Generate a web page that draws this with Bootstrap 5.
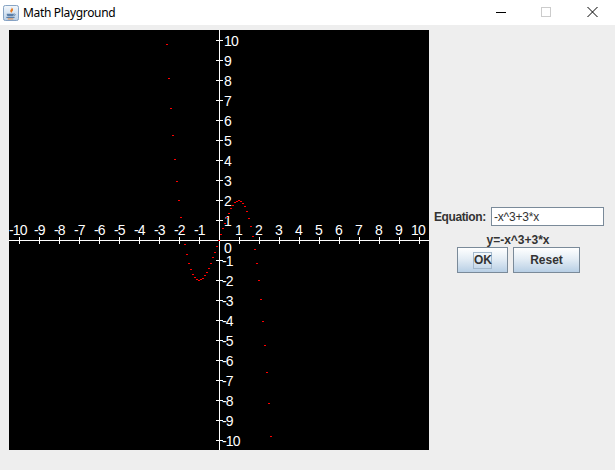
<!DOCTYPE html>
<html lang="en">
<head>
<meta charset="utf-8">
<title>Math Playground</title>
<link href="https://cdn.jsdelivr.net/npm/bootstrap@5.3.0/dist/css/bootstrap.min.css" rel="stylesheet">
<style>
html,body{height:100%;}
body{background:#eeeeee;overflow:hidden;font-family:"Liberation Sans",Arial,sans-serif;color:#333;}
.titlebar{height:25px;background:#fff;}
.titlebar-name{font-family:"Noto Sans","Open Sans",sans-serif;font-size:12px;letter-spacing:-.33px;color:#000;line-height:1;margin-left:4px;}
.appicon{margin-left:3px;margin-top:1px;}
.winbtn{position:relative;width:46px;height:25px;}
.winbtn svg{display:block;}
.wincontrols{margin-right:-1px;}
.workarea{padding:5px 0 0 9px;}
.plot{display:block;flex:none;background:#000;}
.plot text{font-family:"Liberation Sans",Arial,sans-serif;font-size:14px;letter-spacing:-.8px;fill:#fff;}
.sidepanel{width:186px;padding:0 11px 0 5px;}
.eq-label{font-size:12px;font-weight:700;color:#333;letter-spacing:-.4px;white-space:nowrap;}
.eq-input.form-control{width:113px;height:19px;min-height:0;padding:0 2px;border:1px solid #7a8a99;border-radius:0;font-size:12px;letter-spacing:-.2px;color:#333;font-family:"Liberation Sans",Arial,sans-serif;box-shadow:inset 0 0 0 1px #fff;background:#fff;}
.eq-result{font-size:12px;font-weight:700;color:#333;line-height:14px;margin-top:7px;margin-right:2px;}
.btn-row{gap:5px;margin-right:1px;}
.swing-btn.btn{height:26px;padding:0;border:1px solid #7a8a99;border-radius:0;font-size:12px;font-weight:700;color:#333;line-height:24px;background:linear-gradient(#fff 0%,#e4edf5 45%,#b8cfe5 100%);}
.ok-btn{width:51px;}
.reset-btn{width:67px;}
.ok-focus{display:inline-block;width:19px;height:17px;line-height:15px;border:1px solid #a3b8cc;}
</style>
</head>
<body>
<header class="titlebar d-flex align-items-center">
  <svg class="appicon" width="16" height="16" viewBox="0 0 17 17">
    <defs><linearGradient id="tile" x1="0" y1="0" x2="0" y2="1"><stop offset="0" stop-color="#f4f8fc"/><stop offset="1" stop-color="#b9cfe6"/></linearGradient></defs>
    <rect x=".5" y=".5" width="16" height="16" rx="2" fill="url(#tile)" stroke="#7d9cbf"/>
    <path d="M9 2.5c1.2 1.6-1.8 2.6-1.2 4.4.2.7.8 1.2 1.2 1.6-.2-1.2 2.3-2.2 1.6-4C10.3 3.6 9.6 3 9 2.5z" fill="#e8781e"/>
    <path d="M4 9.2h7.5v1.2c0 1-1 1.6-2 1.6H6c-1 0-2-.6-2-1.6z" fill="#5b7fa8"/>
    <path d="M11.5 9.6c1.6-.4 2.2.8 1 1.6l-1.2.5" fill="none" stroke="#5b7fa8" stroke-width=".9"/>
    <path d="M3.5 13.2h8.8" stroke="#5b7fa8" stroke-width="1.2"/>
    <path d="M5 14.8h6" stroke="#e8781e" stroke-width=".9"/>
  </svg>
  <span class="titlebar-name">Math Playground</span>
  <div class="wincontrols ms-auto d-flex">
    <div class="winbtn"><svg width="46" height="25"><path d="M18 12.5h10" stroke="#000" stroke-width="1"/></svg></div>
    <div class="winbtn"><svg width="46" height="25"><rect x="17.5" y="7.5" width="9" height="9" fill="none" stroke="#cccccc"/></svg></div>
    <div class="winbtn"><svg width="46" height="25"><path d="M17.5 7l10 10M27.5 7l-10 10" stroke="#000" stroke-width="1"/></svg></div>
  </div>
</header>
<main class="workarea d-flex">
  <svg id="plot" class="plot" width="420" height="420" viewBox="0 0 420 420" shape-rendering="crispEdges">
    <path d="M210.5 0V420M0 210.5H420" stroke="#fff" fill="none"/>
    <path id="ticks" stroke="#fff" fill="none" d=""/>
    <g id="xlabels">
      <text x="0" y="205">-10</text><text x="25" y="205">-9</text><text x="45" y="205">-8</text><text x="65" y="205">-7</text><text x="85" y="205">-6</text><text x="105" y="205">-5</text><text x="125" y="205">-4</text><text x="145" y="205">-3</text><text x="165" y="205">-2</text><text x="185" y="205">-1</text>
      <text x="226" y="205">1</text><text x="246" y="205">2</text><text x="266" y="205">3</text><text x="286" y="205">4</text><text x="306" y="205">5</text><text x="326" y="205">6</text><text x="346" y="205">7</text><text x="366" y="205">8</text><text x="386" y="205">9</text><text x="402" y="205">10</text>
    </g>
    <g id="ylabels">
      <text x="215" y="16">10</text><text x="215" y="36">9</text><text x="215" y="56">8</text><text x="215" y="76">7</text><text x="215" y="96">6</text><text x="215" y="116">5</text><text x="215" y="136">4</text><text x="215" y="156">3</text><text x="215" y="176">2</text><text x="215" y="196">1</text>
      <text x="215" y="223">0</text>
      <text x="213" y="236">-1</text><text x="213" y="256">-2</text><text x="213" y="276">-3</text><text x="213" y="296">-4</text><text x="213" y="316">-5</text><text x="213" y="336">-6</text><text x="213" y="356">-7</text><text x="213" y="376">-8</text><text x="213" y="396">-9</text><text x="213" y="416">-10</text>
    </g>
    <g id="curve" fill="#f00"></g>
  </svg>
  <aside class="sidepanel d-flex flex-column align-items-center justify-content-center">
    <div class="d-flex align-items-center justify-content-between w-100">
      <label class="eq-label" for="eq">Equation:</label>
      <input id="eq" class="form-control eq-input" type="text" value="-x^3+3*x">
    </div>
    <div class="eq-result text-center">y=-x^3+3*x</div>
    <div class="d-flex btn-row">
      <button type="button" class="btn swing-btn ok-btn"><span class="ok-focus">OK</span></button>
      <button type="button" class="btn swing-btn reset-btn">Reset</button>
    </div>
  </aside>
</main>
<script>
(function(){
  var d='';
  for(var i=-10;i<=10;i++){
    if(i===0)continue;
    var p=210+i*20;
    d+='M'+(p+.5)+' 207V214M207 '+(p+.5)+'H214';
  }
  document.getElementById('ticks').setAttribute('d',d);
  var g=document.getElementById('curve');
  for(var k=-26;k<=26;k++){
    var x=k/10,y=-x*x*x+3*x;
    var r=document.createElementNS('http://www.w3.org/2000/svg','rect');
    r.setAttribute('x',210+k*2-1);
    r.setAttribute('y',Math.round(210-y*20));
    r.setAttribute('width',2);
    r.setAttribute('height',1);
    g.appendChild(r);
  }
})();
</script>
<script src="https://cdn.jsdelivr.net/npm/bootstrap@5.3.0/dist/js/bootstrap.bundle.min.js"></script>
</body>
</html>
